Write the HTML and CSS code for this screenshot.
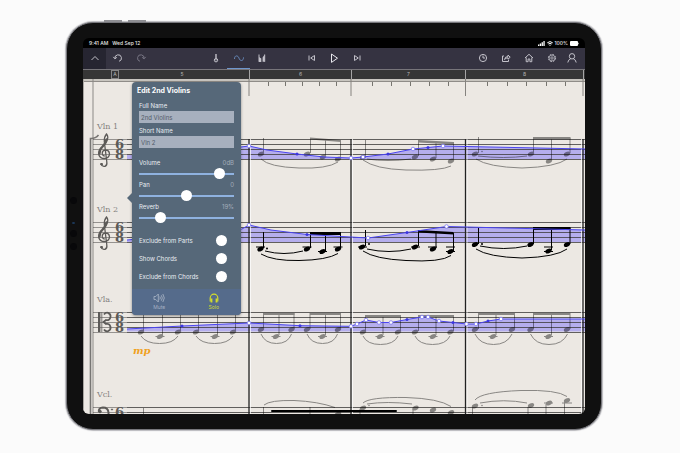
FILE: index.html
```html
<!DOCTYPE html>
<html lang="en">
<head>
  <meta charset="UTF-8">
  <meta name="viewport" content="width=device-width, initial-scale=1.0">
  <title>Score Editor</title>
  <link rel="stylesheet" href="styles.css">
</head>
<body>
  <div class="tablet">
    <span class="side-button first"></span>
    <span class="side-button second"></span>
    <div class="sensors"><i></i><i class="blue"></i><i></i><i></i></div>
    <div class="screen">
      <header class="status">
        <span>9:41 AM</span>
        <span>Wed Sep 12</span>
        <span class="status-right">
          <svg width="7" height="5" viewBox="0 0 7 5" fill="#fff"><path d="M0 3.5h1.3V5H0zM1.8 2.5h1.3V5H1.8zM3.6 1.3h1.3V5H3.6zM5.4 0h1.3v5H5.4z"/></svg>
          <svg width="6" height="5" viewBox="0 0 6 5" fill="none" stroke="#fff"><path d="M.3 1.8Q3-.6 5.7 1.8M1.3 3Q3 1.5 4.7 3M2.4 4.2h1.2"/></svg>
          <span>100%</span>
          <svg width="9" height="5" viewBox="0 0 9 5" fill="#fff"><rect width="8" height="5" rx="1"/><path d="M8.3 1.7h.6v1.6h-.6z"/></svg>
        </span>
      </header>

      <nav class="toolbar">
        <div class="tools left">
          <button class="tool menu" aria-label="Collapse"><svg viewBox="0 0 14 14"><path d="M3.500 9 7 5.500 10.500 9"/></svg></button>
          <button class="tool" aria-label="Undo"><svg viewBox="0 0 14 14"><path d="M3.900 7.500A3.300 3.300 0 1 1 8 10.300M2.300 5.900l1.600 1.900L5.800 6.400"/></svg></button>
          <button class="tool dim" aria-label="Redo"><svg viewBox="0 0 14 14"><path d="M10.100 7.500A3.300 3.300 0 1 0 6 10.300M11.700 5.900l-1.600 1.900L8.200 6.400"/></svg></button>
        </div>
        <div class="tools center">
          <button class="tool" aria-label="Notes"><svg viewBox="0 0 14 14"><path d="M7 3v4.500" stroke-width="1.400"/><circle cx="7" cy="9.200" r="1.700"/><path d="M7 8v1.500"/></svg></button>
          <button class="tool active" aria-label="Automation"><svg viewBox="0 0 14 14"><path d="M2.500 8C2.500 4 6 4 7 7.200S11.500 10.500 11.500 6.400"/></svg></button>
          <button class="tool" aria-label="Mixer"><svg viewBox="0 0 14 14"><path d="M4 3.500v7.300M9.700 3.500v7.300"/><path fill="currentColor" stroke="none" d="M4 6l2.300 1.500V11H4zM9.700 3.500v7.300H7.600V6.500z"/></svg></button>
        </div>
        <div class="tools transport">
          <button class="tool" aria-label="Previous"><svg viewBox="0 0 14 14"><path d="M4 4.500v5M9.500 4.500v5L5.700 7z"/></svg></button>
          <button class="tool play" aria-label="Play"><svg viewBox="0 0 14 14"><path d="M3.500 3v8.400l6-4.200z"/></svg></button>
          <button class="tool" aria-label="Next"><svg viewBox="0 0 14 14"><path d="M9 4.500v5M3.500 4.500v5L7.300 7z"/></svg></button>
        </div>
        <div class="tools right">
          <button class="tool" aria-label="History"><svg viewBox="0 0 14 14"><circle cx="7" cy="7" r="3.600"/><path d="M7 4.600V7h2"/></svg></button>
          <button class="tool" aria-label="Share"><svg viewBox="0 0 14 14"><path d="M5 5H3.500v5.500h6V8.800M5.500 8.500Q6 5.500 9 5.500V4l2.200 2.200L9 8.200V6.800Q7 6.800 5.500 8.500z"/></svg></button>
          <button class="tool" aria-label="Home"><svg viewBox="0 0 14 14"><path d="M3 7l4-3.700L11 7M4.200 6.500v4.200h1.900V8h1.800v2.700h1.900V6.500"/></svg></button>
          <button class="tool" aria-label="Settings"><svg viewBox="0 0 14 14"><circle cx="7" cy="7" r="3.600" stroke-dasharray="1.700 1.130" stroke-width="1"/><circle cx="7" cy="7" r="2.900" stroke-width=".700"/><circle cx="7" cy="7" r="1.200" stroke-width=".800"/></svg></button>
          <button class="tool last" aria-label="Account"><svg viewBox="0 0 14 14"><circle cx="6" cy="5.300" r="2.700"/><path d="M1.800 11.500Q2.200 8.600 4.600 7.900M10.200 11.500Q9.800 8.600 7.400 7.900"/></svg></button>
        </div>
      </nav>

      <div class="ruler">
        <span class="marker"><b>A</b></span>
        <span>5</span>
        <span></span>
        <span class="bar">6</span>
        <span class="bar">7</span>
        <span class="bar">8</span>
        <span class="bar"></span>
      </div>

      <main class="score">
        <svg class="sheet" viewBox="83 79 502 335">
          <defs>
            <ellipse id="head" rx="3.300" ry="2.200" transform="rotate(-25)"/>
            <g id="treble" fill="none" stroke-linecap="round">
              <path stroke-width="1.300" d="M2.500 26q1 3 4 2.300 2.400-1 1.800-4.300L5.800 3.500Q5.500-1 8-4q2.500 3 .2 7.500-1.500 3-5 6Q-.5 12.500.4 17q1.300 3.500 5.300 3.500 5-.3 5.300-4.500-.3-4-4-4-3.300.3-3.300 3.500.2 2 2 2.500"/>
              <path stroke-width="2.300" d="M8 1.500Q7.200 5.500 3.700 9 .9 11.500 1 15.500M2.800 26.200h.6"/>
            </g>
            <g id="six-eight">
              <text class="meter" x="0" y="8">6</text>
              <text class="meter" x="0" y="18">8</text>
            </g>
          </defs>

          <!-- page edge and beat ticks -->
          <path fill="#c8c5bf" d="M83 79h502v2H83z"/>
          <path stroke="#8f8c88" d="M83 81.500h502"/>
          <path stroke="#77756f" d="M268.500 82v4M285.500 82v4M302.500 82v4M319.500 82v4M336.500 82v4M372.500 82v4M391.500 82v4M410.500 82v4M429.500 82v4M448.500 82v4M487.500 82v4M507.500 82v4M526.500 82v4M546.500 82v4M565.500 82v4"/>
          <path stroke="#85827e" d="M249 79v17M351 79v17M465.500 79v17M583 79v17"/>
          <path stroke="#a9a6a1" d="M83.500 79v335"/>
          <path stroke="#8b8986" d="M93 79v335"/>
          <path stroke="#777573" stroke-width="1.600" fill="none" d="M90.500 414V138.500q5 .200 8-3.500"/>

          <!-- automation lanes -->
          <g class="lane">
            <path d="M127 155 241 147l8-1 18 4 30 4 27 3 27 1 12-1 25-3 25-5 15-1.500 15-1.500L585 149v10H127z"/>
            <path d="M127 240 242 229l7-4 22 5 36 4.500 61 3.500 39-5.500 39.500-6L585 230v12H127z"/>
            <path d="M127 329l55-3 67-3 51 2.700 51 .6 6-2.300 9-4 13 2.500h12l16-3 15-2.500h6l11 4 14 1.500 13.500 1.500h9.500l12-3 13-2h84v12.500H127z"/>
          </g>

          <!-- staves -->
          <path class="staff faint" d="M93 139.500h34M93 144.500h34M93 149.500h34M93 154.500h34M93 159.500h34M93 222.500h34M93 227.500h34M93 232.500h34M93 237.500h34M93 242.500h34M93 312.500h34M93 317.500h34M93 322.500h34M93 327.500h34M93 332.500h34M93 407.500h34M93 412.500h34"/>
          <path class="staff" d="M127 139.500h458M127 144.500h458M127 149.500h458M127 154.500h458M127 159.500h458"/>
          <path class="staff" d="M127 222.500h458M127 227.500h458M127 232.500h458M127 237.500h458M127 242.500h458"/>
          <path class="staff" d="M127 312.500h458M127 317.500h458M127 322.500h458M127 327.500h458M127 332.500h458"/>
          <path class="staff" d="M127 407.500h458M127 412.500h458"/>
          <path stroke="#fff" stroke-opacity=".7" d="M250.500 139v275M352.500 139v275M467 139v275M581.500 139v275"/>
          <path stroke="#222" stroke-width="1.300" d="M249 139v275M351 139v275M465.500 139v275M583 139v275"/>

          <!-- names, clefs, meters -->
          <g class="names">
            <text x="97" y="129">Vln 1</text>
            <text x="97" y="212">Vln 2</text>
            <text x="97" y="302">Vla.</text>
            <text x="97" y="397">Vcl.</text>
          </g>
          <g stroke="#5c5a58" fill="#5c5a58">
            <use href="#treble" x="98.500" y="138"/>
            <use href="#treble" x="98.500" y="221"/>
            <path stroke-width="2.400" d="M99.200 312v20"/>
            <path stroke-width=".800" d="M101.800 312v20"/>
            <path fill="none" stroke-width="1.800" d="M104 314.500q1.500-2.200 4-1.700 3 1.200 2.500 4.200-1 4-4.500 3l-2.500 2 2.500 2q3.500-1 4.500 3 .5 3-2.500 4.200-2.500.5-4-1.700"/>
            <path fill="none" stroke-width="2" d="M99 412q-1-4 4-4.500 5 0 5.500 5v3"/>
            <circle cx="100" cy="411.500" r="1.300"/>
            <circle cx="112" cy="409.500" r=".600"/>
          </g>
          <g fill="#5c5a58">
            <use href="#six-eight" x="115" y="141"/>
            <use href="#six-eight" x="115" y="224"/>
            <use href="#six-eight" x="115" y="314"/>
            <use href="#six-eight" x="115" y="409"/>
          </g>

          <!-- Violin 1 -->
          <g class="notes soft">
            <use href="#head" x="261" y="154"/><use href="#head" x="307" y="154"/><use href="#head" x="323" y="157"/><use href="#head" x="338" y="159"/>
            <use href="#head" x="363" y="157"/><use href="#head" x="415" y="157"/><use href="#head" x="433" y="159"/><use href="#head" x="451" y="161"/>
            <use href="#head" x="475" y="154"/><use href="#head" x="531" y="154"/><use href="#head" x="549" y="161"/><use href="#head" x="567" y="154"/>
            <circle cx="482" cy="151.500" r=".800"/>
            <path d="M310 137.500l31 2.500v2l-31-2.500zM418.500 140l35 2v2.500l-35-2zM533 137h37.500v2.500H533z"/>
            <path class="stem" d="M263.500 153v-15M310.500 153v-15M325.500 156v-17M340.500 158v-18M365.500 156v-16M418.500 156v-16M436 158v-17M453.500 160v-18M478.500 153v-16M533.500 153v-15M551.500 160v-22M570 153v-15"/>
            <path class="slur" d="M261 159q8 8 38 9 28 1 39-6M363 160q12 9 43 10 35 1 45-4M476 159q12 8 46 9 34-1 45-9M367 159q20 3 44 0M478 156q26 3 49 0"/>
          </g>

          <!-- Violin 2, selected part -->
          <g class="notes">
            <use href="#head" x="260.500" y="249"/><use href="#head" x="307" y="249"/><use href="#head" x="322.500" y="251.500"/><use href="#head" x="338" y="249"/>
            <use href="#head" x="362" y="247"/><use href="#head" x="415" y="247"/><use href="#head" x="433" y="249"/><use href="#head" x="450.500" y="251.500"/>
            <use href="#head" x="475" y="244.500"/><use href="#head" x="530.500" y="244.500"/><use href="#head" x="548.500" y="251"/><use href="#head" x="567" y="244.500"/>
            <circle cx="267" cy="248.500" r="1"/><circle cx="369" cy="244" r="1"/><circle cx="482" cy="244" r="1"/>
            <path d="M310 232h31v3h-31zM418 230l35.500 2v2.500l-35.500-2zM533 227h37.500v3H533z"/>
            <path class="stem" d="M263.500 248v-16M310.500 248v-16M325.500 251v-18M340.500 248v-16M365.500 246v-16M418.500 246v-16M436 248v-17M453.500 251v-18M478.500 244v-16M533.500 244v-16M551.500 250v-22M570 244v-16"/>
            <path class="stem" d="M256 247h9M302.500 247h9M318 251.500h9M333.500 247h9M358 247h9M411 247h9M428 247h9M446 247h9M446 251.500h9M544 247h9M544 251.500h9"/>
            <path class="slur" d="M265 251q19 5 38 0M261 254q12 7 38 6.500 28-.5 39-7M367 249q22 5 44 0M363 251q12 8 43 9.500 35 2 45-5M480 246q24 5 47 0M476 249q12 8 46 9 34-1 45-9"/>
          </g>

          <!-- Viola -->
          <g class="notes soft">
            <use href="#head" x="141" y="332"/><use href="#head" x="160" y="336.500"/><use href="#head" x="178" y="332"/><use href="#head" x="196" y="332"/><use href="#head" x="215" y="336.500"/><use href="#head" x="233" y="332"/>
            <use href="#head" x="261" y="329.500"/><use href="#head" x="276" y="336.500"/><use href="#head" x="291.500" y="329.500"/><use href="#head" x="307" y="329.500"/><use href="#head" x="322.500" y="336.500"/><use href="#head" x="338" y="329.500"/>
            <use href="#head" x="363" y="332"/><use href="#head" x="380" y="336.500"/><use href="#head" x="398" y="332"/><use href="#head" x="415" y="332"/><use href="#head" x="433" y="336.500"/><use href="#head" x="450.500" y="332"/>
            <use href="#head" x="475" y="329.500"/><use href="#head" x="493" y="336.500"/><use href="#head" x="512" y="329.500"/><use href="#head" x="530.500" y="329.500"/><use href="#head" x="548.500" y="336.500"/><use href="#head" x="567" y="329.500"/>
            <path d="M263 313h31.500v2H263zM310 313h31v2h-31zM365 315h36v2h-36zM418 315h36v2h-36zM478 313h37v2h-37zM533 313h37v2h-37z"/>
            <path class="stem" d="M143.500 331v-18M162.500 335v-22M180.500 331v-18M198.500 331v-18M217.500 335v-22M235.500 331v-18M263.500 329v-16M279 335v-22M294 329v-16M310 329v-16M325.500 335v-22M340.500 329v-16M365.500 331v-16M383 335v-20M400.500 331v-16M418.500 331v-16M436 335v-20M453.500 331v-16M478.500 329v-16M496 335v-22M514.500 329v-16M533.500 329v-16M551.500 335v-22M570 329v-16"/>
            <path class="stem" d="M155.500 336.500h9M210.500 336.500h9M271.500 336.500h9M318 336.500h9M375.500 336.500h9M428.500 336.500h9M488.500 336.500h9M544 336.500h9"/>
            <path class="slur" d="M141 336q5 7.500 18.500 7.500t18.500-7.500M196 336q5 7.500 18.500 7.500t18.500-7.500M261 334q4 9.500 15.500 9.500t15-9.500M307 334q4 9.500 15.500 9.500t15-9.500M363 336q4 8.500 17.500 8.500t17.500-8.500M415 336q4 8.500 17.500 8.500t17.500-8.500M475 334q5 10.500 18.500 10.500t18.500-10.500M530.500 334q5 10.500 18.500 10.500t18.500-10.500"/>
          </g>
          <text class="dynamic" x="133" y="354">mp</text>

          <!-- Cello -->
          <g class="notes soft">
            <use href="#head" x="338" y="414"/><use href="#head" x="363" y="408"/><use href="#head" x="415.500" y="408"/><use href="#head" x="433" y="410"/><use href="#head" x="451" y="412.500"/>
            <use href="#head" x="475" y="406"/><use href="#head" x="531" y="405.500"/><use href="#head" x="549" y="403"/><use href="#head" x="567" y="400.500"/>
            <circle cx="369" cy="405.500" r=".800"/><circle cx="482" cy="405.500" r=".800"/>
            <path class="stem" d="M143.500 408v6M263.500 407v7M310 407v7M360 409v5M413 409v5M472.500 407v7M528 407v7M546 404v10M564.500 402v12M544 403h9M562 403h10"/>
            <path class="slur" d="M264 405q6-5 30-4.500 24 1 41 7M363 403q6-6 43-5.500 33 1 45 9M367 404q20-3 45 0M475 400q6-8 46-9.500 36-1 46 6M480 403q24-4.500 47 0"/>
          </g>

          <g class="curve">
            <path d="M241 147l8-1 18 4 30 4 27 3 27 1 12-1 25-3 25-5 15-1.500 15-1.500L585 149"/>
            <path d="M127 240 242 229l7-4 22 5 36 4.500 61 3.500 39-5.500 39.500-6L585 230"/>
            <path d="M127 329l55-3 67-3 51 2.700 51 .6 6-2.300 9-4 13 2.500h12l16-3 15-2.500h6l11 4 14 1.500 13.500 1.500h9.500l12-3 13-2h84"/>
          </g>
          <g fill="#3d36e0">
            <circle cx="297" cy="154" r="1.500"/><circle cx="388" cy="154" r="1.500"/><circle cx="428" cy="147.500" r="1.500"/>
            <circle cx="307" cy="234.500" r="1.500"/><circle cx="407" cy="232.500" r="1.500"/>
            <circle cx="182" cy="326" r="1.500"/><circle cx="300" cy="325.700" r="1.500"/><circle cx="407" cy="319.500" r="1.500"/><circle cx="453" cy="322.500" r="1.500"/><circle cx="488" cy="321" r="1.500"/>
          </g>
          <g class="handles">
            <circle cx="249" cy="146" r="1.800"/><circle cx="351" cy="158" r="1.800"/><circle cx="363" cy="157" r="1.800"/><circle cx="413" cy="149" r="1.800"/><circle cx="443" cy="146" r="1.800"/>
            <circle cx="249" cy="225" r="1.800"/><circle cx="368" cy="238" r="1.800"/><circle cx="446.500" cy="226.500" r="1.800"/>
            <circle cx="249" cy="323" r="1.800"/><circle cx="351" cy="326.300" r="1.800"/><circle cx="357" cy="324" r="1.800"/><circle cx="366" cy="320" r="1.800"/><circle cx="379" cy="322.500" r="1.800"/><circle cx="391" cy="322.500" r="1.800"/><circle cx="422" cy="317" r="1.800"/><circle cx="428" cy="317" r="1.800"/><circle cx="439" cy="321" r="1.800"/><circle cx="466.500" cy="324" r="1.800"/><circle cx="476" cy="324" r="1.800"/><circle cx="501" cy="319" r="1.800"/>
          </g>
        </svg>

        <form class="popover">
          <h2>Edit 2nd Violins</h2>
          <div class="fields">
            <label for="fullName">Full Name</label>
            <input type="text" id="fullName" value="2nd Violins">
            <label for="shortName">Short Name</label>
            <input type="text" id="shortName" value="Vln 2">
          </div>
          <div class="sliders">
            <div class="row"><label for="volume">Volume</label><output>0dB</output></div>
            <input type="range" id="volume" value="89">
            <div class="row"><label for="pan">Pan</label><output>0</output></div>
            <input type="range" id="pan" value="50">
            <div class="row"><label for="reverb">Reverb</label><output>19%</output></div>
            <input type="range" id="reverb" value="19">
          </div>
          <div class="switches">
            <div class="row"><label for="parts">Exclude from Parts</label><input type="checkbox" id="parts"></div>
            <div class="row"><label for="chords">Show Chords</label><input type="checkbox" id="chords"></div>
            <div class="row"><label for="noChords">Exclude from Chords</label><input type="checkbox" id="noChords"></div>
          </div>
          <div class="actions">
            <button type="button"><svg width="12" height="10" viewBox="0 0 12 10" fill="none" stroke="currentColor" stroke-width=".900"><path d="M1 3.500h1.800L5.300 1v8L2.800 6.500H1zM6.800 3.500q1 1.500 0 3M8.300 2.300q2 2.700 0 5.400M9.800 1q3 4 0 8"/></svg>Mute</button>
            <button type="button" class="on"><svg width="12" height="10" viewBox="0 0 12 10" fill="none" stroke="currentColor"><path stroke-width="1.200" d="M2.200 8.500V5a3.800 3.800 0 0 1 7.600 0v3.500"/><path stroke-width="1.800" d="M3.500 5.500v4M8.500 5.500v4"/></svg>Solo</button>
          </div>
        </form>
        <div class="home-bar"></div>
      </main>
    </div>
  </div>
</body>
</html>
```
FILE: styles.css
```css
* {
  box-sizing: border-box;
}

body {
  margin: 0;
  padding: 22px 78px 22px 66px;
  background: #fbfbfb;
  font-family: Inter, "Liberation Sans", sans-serif;
  font-size: 6px;
}

button {
  border: none;
  padding: 0;
  background: none;
  font-family: inherit;
}

.tablet {
  position: relative;
  padding: 15px 16px;
  background: #101010;
  border: 1px solid #77777c;
  border-radius: 27px;
  box-shadow: 0 0 1px 1px #b9b9bd;
}

.side-button {
  position: absolute;
  top: -3px;
  width: 18px;
  height: 2px;
  background: #8e8e93;
}

.side-button.first {
  left: 37px;
}

.side-button.second {
  left: 61px;
}

.sensors {
  position: absolute;
  left: 3px;
  top: 174px;
  display: flex;
  flex-direction: column;
  align-items: center;
  gap: 6px;
}

.sensors i {
  width: 7px;
  height: 7px;
  border-radius: 50%;
  background: #08080a;
}

.sensors .blue {
  width: 3px;
  height: 2px;
  margin-top: 12px;
  background: #1d3a5c;
}

.screen {
  overflow: hidden;
  border-radius: 6px;
  background: #000;
}

/* status bar */
.status {
  display: flex;
  align-items: center;
  gap: 4px;
  height: 10px;
  padding: 0 6px;
  color: #e6e6e6;
  font-size: 5px;
  font-weight: 500;
}

.status-right {
  display: flex;
  align-items: center;
  gap: 2px;
  margin-left: auto;
}

/* toolbar */
.toolbar {
  display: grid;
  grid-template-columns: auto 52fr auto 27fr auto 102fr auto 3fr;
  height: 21px;
  background: #353341;
}

.tools {
  display: flex;
}

.left {
  grid-column: 1;
}

.center {
  grid-column: 3;
}

.transport {
  grid-column: 5;
}

.right {
  grid-column: 7;
}

.tool {
  display: flex;
  align-items: center;
  justify-content: center;
  width: 23px;
  border-bottom: 1px solid transparent;
  color: #c2c1c9;
}

.tool svg {
  width: 14px;
  height: 14px;
  fill: none;
  stroke: currentColor;
}

.tool.menu {
  background: #262531;
}

.tool.dim {
  color: #777583;
}

.tool.play {
  color: #e8e8ee;
}

.tool.active {
  color: #6688b8;
  border-bottom-color: #6e96cc;
}

.tool.last {
  width: 18px;
}

/* bar ruler */
.ruler {
  display: grid;
  grid-template-columns: 64fr 70fr 32fr 102fr 114fr 118fr 2fr;
  height: 10px;
  border-top: 1px solid #77757a;
  background: #363636;
  color: #b4b4b4;
  font-size: 5px;
  line-height: 9px;
  text-align: center;
}

.ruler .bar {
  border-left: 1px solid #a5a5a5;
}

.marker b {
  display: inline-block;
  width: 8px;
  border: 1px solid #858585;
  line-height: 7px;
  font-weight: 400;
}

/* score */
.score {
  position: relative;
  background: #ece8e3;
}

.sheet {
  display: block;
  width: 100%;
}

.staff {
  stroke: #3e3c3b;
  stroke-opacity: 0.8;
}

.staff.faint {
  stroke-opacity: 0.5;
}

.lane {
  fill: #5b50ff;
  fill-opacity: 0.38;
}

.names {
  fill: #83807d;
  font-family: "DejaVu Serif", serif;
  font-size: 8px;
}

.meter {
  font-family: "DejaVu Serif", serif;
  font-size: 13px;
  font-weight: bold;
}

.dynamic {
  fill: #f0a020;
  font-family: "DejaVu Serif", serif;
  font-size: 10px;
  font-weight: bold;
  font-style: italic;
}

.notes {
  fill: #000;
  stroke: none;
}

.notes .stem,
.notes .slur {
  fill: none;
  stroke: #000;
}

.notes.soft {
  opacity: 0.42;
}

.curve {
  fill: none;
  stroke: #4a44f0;
}

.handles {
  fill: #fff;
  stroke: #7d78f2;
  stroke-width: 0.800;
}

.home-bar {
  position: absolute;
  left: 50%;
  bottom: 2px;
  width: 126px;
  height: 2px;
  margin-left: -63px;
  border-radius: 2px;
  background: #000;
}

/* part editor */
.popover {
  position: absolute;
  left: 49px;
  top: 3px;
  width: 109px;
  border-radius: 4px;
  background: #566879;
  box-shadow: 0 1px 3px rgba(0, 0, 0, 0.4);
  color: #e9edf2;
  line-height: 11px;
}

.popover::before {
  content: "";
  position: absolute;
  left: -5px;
  top: 111px;
  border: 5px solid transparent;
  border-left: none;
  border-right-color: #566879;
}

.popover h2 {
  margin: 0;
  padding: 0 5px;
  color: #fff;
  font-size: 7px;
  line-height: 18px;
}

.fields,
.sliders,
.switches {
  display: flex;
  flex-direction: column;
  padding: 0 7px;
}

.fields input {
  width: 100%;
  height: 12px;
  margin-bottom: 2px;
  padding: 0 2px;
  border: none;
  border-radius: 0;
  background: #a7b0be;
  color: #535c69;
  font-family: inherit;
  font-size: 6px;
}

.row {
  display: flex;
  align-items: center;
  justify-content: space-between;
}

.sliders {
  margin-top: 7px;
}

.sliders output {
  color: #a3adba;
}

.sliders input {
  appearance: none;
  width: 100%;
  height: 11px;
  margin: 0;
  background: linear-gradient(#8fb2e0, #8fb2e0) center / 100% 2px no-repeat;
}

.sliders input::-webkit-slider-thumb {
  appearance: none;
  width: 11px;
  height: 11px;
  border-radius: 50%;
  background: #fff;
}

.switches {
  padding: 8px 7px 4px;
}

.switches .row {
  height: 18px;
}

.switches input {
  appearance: none;
  width: 11px;
  height: 11px;
  margin: 0 7px 0 0;
  border-radius: 50%;
  background: #fff;
}

.actions {
  display: flex;
  height: 26px;
  border-radius: 0 0 4px 4px;
  background: #556b8b;
}

.actions button {
  display: flex;
  flex: 1;
  flex-direction: column;
  align-items: center;
  justify-content: center;
  color: #a4b0c2;
  font-size: 5px;
  line-height: 8px;
}

.actions .on {
  color: #d3dc2c;
}
```
